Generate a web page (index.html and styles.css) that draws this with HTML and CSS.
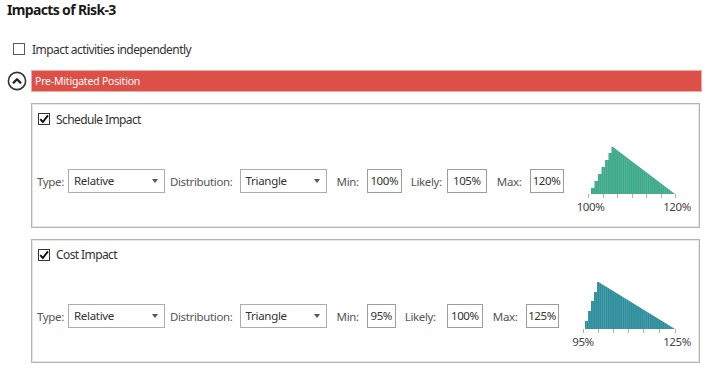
FILE: index.html
```html
<!DOCTYPE html>
<html>
<head>
<meta charset="utf-8">
<link rel="stylesheet" href="styles.css">
</head>
<body>
<div class="page">
  <div class="title">Impacts of Risk-3</div>
  <div class="indep">
    <span class="cb"></span>
    <span class="indep-label">Impact activities independently</span>
  </div>
  <div class="section-head">
    <div class="toggle">
      <svg width="20" height="20" viewBox="0 0 20 20"><circle cx="10" cy="10" r="8.6" fill="#fff" stroke="#333" stroke-width="1.6"/><path d="M6.6 11.6 L10 8.2 L13.4 11.6" fill="none" stroke="#222" stroke-width="2.3" stroke-linecap="round" stroke-linejoin="round"/></svg>
    </div>
    <div class="bar">Pre-Mitigated Position</div>
  </div>

  <div class="panel">
    <div class="panel-check">
      <span class="cb checked"><svg width="12" height="12" viewBox="0 0 12 12"><path d="M2.2 6.2 L4.8 9 L10 2.4" fill="none" stroke="#111" stroke-width="1.9"/></svg></span>
      <span class="panel-title">Schedule Impact</span>
    </div>
    <div class="panel-body">
      <span class="lbl l-type">Type:</span>
      <span class="select s-type">Relative<i class="arrow"></i></span>
      <span class="lbl l-dist">Distribution:</span>
      <span class="select s-dist">Triangle<i class="arrow"></i></span>
      <span class="lbl l-min">Min:</span>
      <span class="val w35">100%</span>
      <span class="lbl l-like">Likely:</span>
      <span class="val w40">105%</span>
      <span class="lbl l-max">Max:</span>
      <span class="val w34">120%</span>
      <svg class="chart" width="130" height="80" viewBox="0 0 130 80">
        <defs>
          <pattern id="stripes1" width="2.1" height="4" patternUnits="userSpaceOnUse">
            <rect x="1.6" y="0" width="0.5" height="4" fill="#fff" fill-opacity="0.18"/>
          </pattern>
        </defs>
        <path d="M25 53 V47 H28.5 V40 H32 V33 H35.5 V26 H39 V19 H42.5 V12 H45.5 V6 H47 L109 53 Z" fill="#3eaa89"/>
        <path d="M25 53 V47 H28.5 V40 H32 V33 H35.5 V26 H39 V19 H42.5 V12 H45.5 V6 H47 L109 53 Z" fill="url(#stripes1)"/>
        <g stroke="#b0b0b0" stroke-width="1">
          <line x1="22.5" y1="53" x2="22.5" y2="57"/>
          <line x1="37.5" y1="53" x2="37.5" y2="57"/>
          <line x1="51.5" y1="53" x2="51.5" y2="57"/>
          <line x1="66.5" y1="53" x2="66.5" y2="57"/>
          <line x1="80.5" y1="53" x2="80.5" y2="57"/>
          <line x1="95.5" y1="53" x2="95.5" y2="57"/>
          <line x1="109.5" y1="53" x2="109.5" y2="57"/>
        </g>
        <text class="axis" x="24.5" y="70" text-anchor="middle">100%</text>
        <text class="axis" x="111" y="70" text-anchor="middle">120%</text>
      </svg>
    </div>
  </div>

  <div class="panel panel2">
    <div class="panel-check">
      <span class="cb checked"><svg width="12" height="12" viewBox="0 0 12 12"><path d="M2.2 6.2 L4.8 9 L10 2.4" fill="none" stroke="#111" stroke-width="1.9"/></svg></span>
      <span class="panel-title">Cost Impact</span>
    </div>
    <div class="panel-body">
      <span class="lbl l-type">Type:</span>
      <span class="select s-type">Relative<i class="arrow"></i></span>
      <span class="lbl l-dist">Distribution:</span>
      <span class="select s-dist">Triangle<i class="arrow"></i></span>
      <span class="lbl l-min">Min:</span>
      <span class="val w29">95%</span>
      <span class="lbl l-like">Likely:</span>
      <span class="val w36">100%</span>
      <span class="lbl l-max">Max:</span>
      <span class="val w33">125%</span>
      <svg class="chart" width="130" height="80" viewBox="0 0 130 80">
        <defs>
          <pattern id="stripes2" width="2.1" height="4" patternUnits="userSpaceOnUse">
            <rect x="1.6" y="0" width="0.5" height="4" fill="#fff" fill-opacity="0.18"/>
          </pattern>
        </defs>
        <path d="M19 53 V45 H22 V35 H25 V25 H28 V16 H31 V6 H32.5 L109 53 Z" fill="#2f8f9d"/>
        <path d="M19 53 V45 H22 V35 H25 V25 H28 V16 H31 V6 H32.5 L109 53 Z" fill="url(#stripes2)"/>
        <g stroke="#b0b0b0" stroke-width="1">
          <line x1="17.5" y1="53" x2="17.5" y2="57"/>
          <line x1="32.5" y1="53" x2="32.5" y2="57"/>
          <line x1="47.5" y1="53" x2="47.5" y2="57"/>
          <line x1="62.5" y1="53" x2="62.5" y2="57"/>
          <line x1="77.5" y1="53" x2="77.5" y2="57"/>
          <line x1="93.5" y1="53" x2="93.5" y2="57"/>
          <line x1="109.5" y1="53" x2="109.5" y2="57"/>
        </g>
        <text class="axis" x="17" y="70" text-anchor="middle">95%</text>
        <text class="axis" x="111" y="70" text-anchor="middle">125%</text>
      </svg>
    </div>
  </div>
</div>
</body>
</html>
```

FILE: styles.css
```css
html, body {
  margin: 0;
  padding: 0;
  background: #ffffff;
}
body {
  font-family: "Noto Sans", "Open Sans", sans-serif;
  color: #333;
  width: 708px;
  height: 369px;
  overflow: hidden;
}
.page {
  display: flex;
  flex-direction: column;
}
.title {
  height: 20px;
  line-height: 20px;
  margin-left: 7px;
  font-size: 14px;
  font-weight: 700;
  letter-spacing: -0.65px;
  color: #1a1a1a;
}
.indep {
  margin-top: 20px;
  height: 18px;
  padding-left: 13px;
  display: flex;
  align-items: center;
  gap: 7px;
}
.cb {
  width: 12px;
  height: 12px;
  box-sizing: border-box;
  border: 1px solid #5a5a5a;
  background: #fff;
  display: inline-flex;
  align-items: center;
  justify-content: center;
  flex: none;
}
.cb.checked {
  border-color: #333;
}
.cb svg {
  display: block;
  flex: none;
}
.indep-label {
  font-size: 12px;
  letter-spacing: -0.55px;
  color: #333;
}
.section-head {
  margin-top: 12px;
  height: 22px;
  display: flex;
  align-items: center;
}
.toggle {
  width: 31px;
  height: 22px;
  display: flex;
  align-items: center;
  padding-left: 7px;
  box-sizing: border-box;
}
.toggle svg {
  display: block;
}
.bar {
  flex: 1;
  margin-right: 6px;
  height: 22px;
  box-sizing: border-box;
  background: #dc5047;
  border: 1px solid #f0aaa4;
  color: #fff;
  font-size: 10.5px;
  line-height: 20px;
  padding-left: 3px;
  letter-spacing: -0.2px;
}
.panel {
  margin-top: 11px;
  margin-left: 31px;
  width: 669px;
  height: 125px;
  box-sizing: border-box;
  border: 1px solid #b4b4b0;
  box-shadow: inset 0 0 0 1px #e6e6e2;
  padding: 6px 3px 6px 6px;
  display: flex;
  flex-direction: column;
}
.panel2 {
  height: 124px;
}
.panel-check {
  height: 18px;
  display: flex;
  align-items: center;
  gap: 6px;
}
.panel-title {
  font-size: 12px;
  letter-spacing: -0.6px;
  color: #333;
}
.panel-body {
  margin-top: 13px;
  height: 80px;
  display: flex;
  align-items: center;
  margin-left: -1px;
}
.lbl {
  font-size: 11.5px;
  letter-spacing: -0.35px;
  color: #555;
  margin-right: 4px;
}
.l-dist { margin-left: 5px; margin-right: 7px; }
.l-min { margin-left: 10px; margin-right: 8px; }
.l-like { margin-left: 9px; margin-right: 5px; }
.l-max { margin-left: 10px; margin-right: 8px; }
.panel2 .l-like { margin-right: 11px; }
.panel2 .l-max { margin-left: 10px; }
.select {
  position: relative;
  height: 24px;
  box-sizing: border-box;
  border: 1px solid #adadad;
  font-size: 11.5px;
  letter-spacing: -0.3px;
  line-height: 21px;
  padding-left: 5px;
  color: #333;
}
.s-type { width: 97px; }
.s-dist { width: 87px; }
.arrow {
  position: absolute;
  right: 6px;
  top: 9px;
  width: 0;
  height: 0;
  border-left: 3px solid transparent;
  border-right: 3px solid transparent;
  border-top: 4px solid #555;
}
.val {
  height: 24px;
  box-sizing: border-box;
  border: 1px solid #9d9d9d;
  font-size: 11.5px;
  letter-spacing: -0.4px;
  line-height: 21px;
  text-align: center;
  color: #333;
}
.w29 { width: 29px; }
.w33 { width: 33px; }
.w34 { width: 34px; }
.w35 { width: 35px; }
.w36 { width: 36px; }
.w40 { width: 40px; }
.chart {
  margin-left: auto;
  display: block;
  flex: none;
}
.axis {
  font-family: "Noto Sans", "Open Sans", sans-serif;
  font-size: 11.5px;
  letter-spacing: -0.4px;
  fill: #444;
}
```
